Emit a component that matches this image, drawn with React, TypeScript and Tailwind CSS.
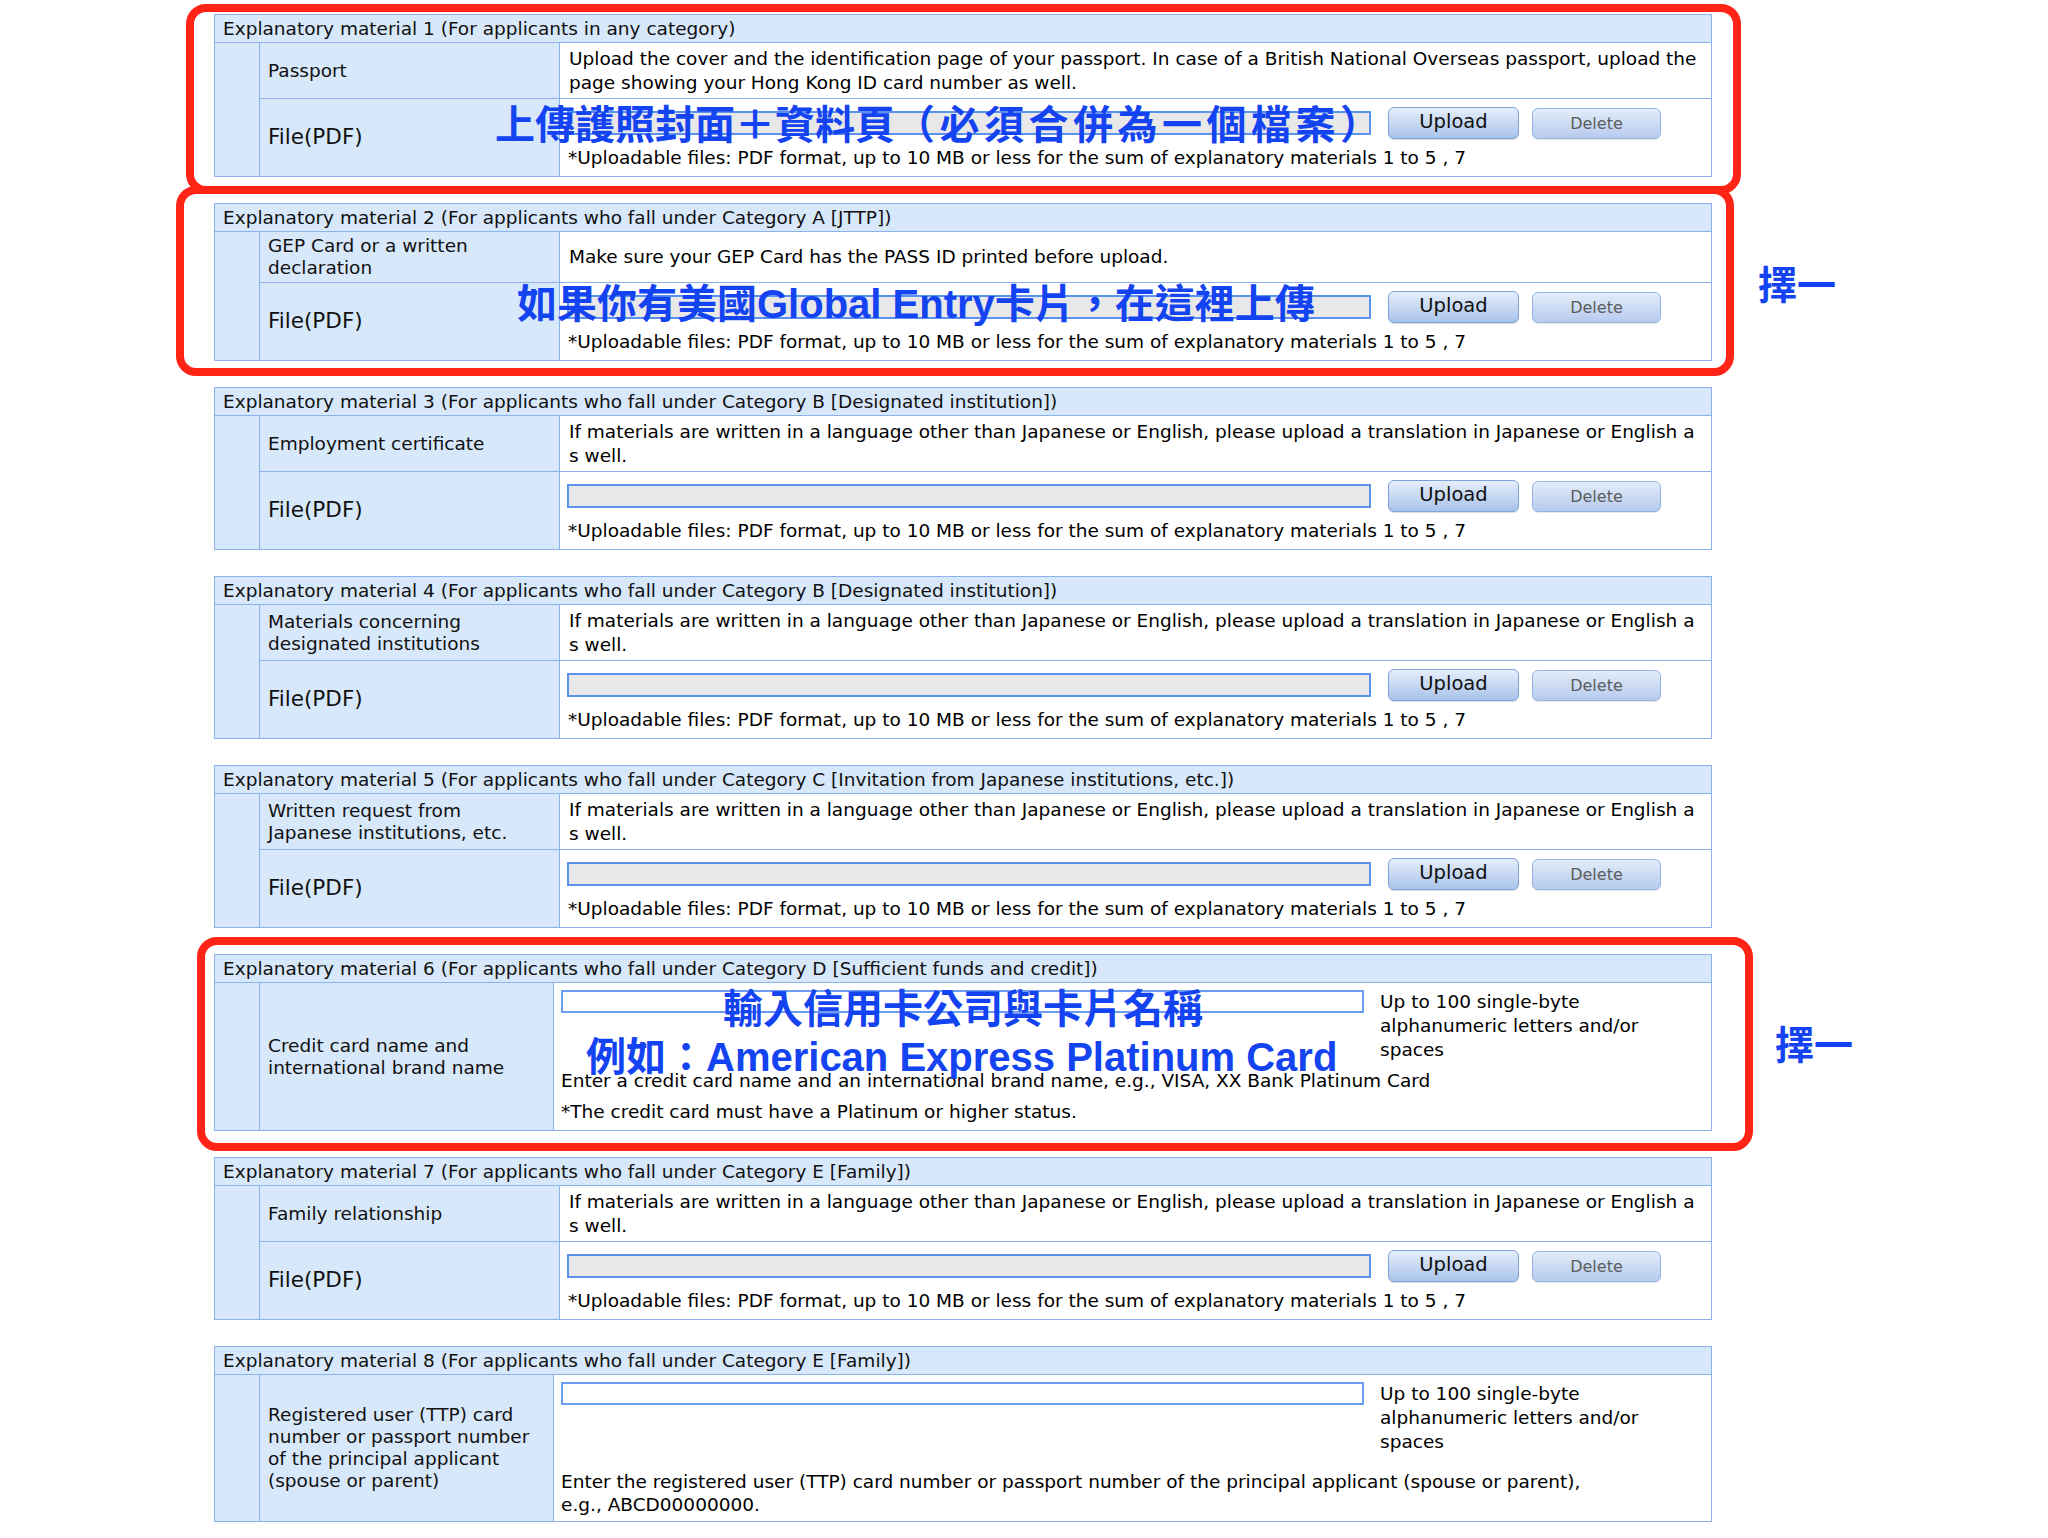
import React from "react";

const LINE = "border-[#8cb2ec]";

function Section({ title, children }: { title: string; children: React.ReactNode }) {
  return (
    <div className="ml-[214px] w-[1498px] border border-[#8cb2ec] bg-[#d8e8fb]">
      <div className="h-[28px] border-b border-[#8cb2ec] pl-[8px] leading-[27px] whitespace-nowrap text-[#111]">
        {title}
      </div>
      <div className="flex">
        <div className="w-[44px] shrink-0" />
        <div className="flex flex-1 flex-col border-l border-[#8cb2ec]">{children}</div>
      </div>
    </div>
  );
}

function Row({
  label,
  labelClass = "w-[300px]",
  rowClass,
  last,
  children,
}: {
  label: React.ReactNode;
  labelClass?: string;
  rowClass: string;
  last?: boolean;
  children: React.ReactNode;
}) {
  return (
    <div className={`flex ${rowClass} ${last ? "" : "border-b " + LINE}`}>
      <div
        className={`${labelClass} flex shrink-0 items-center border-r border-[#8cb2ec] pl-[8px] leading-[22px] text-[#111]`}
      >
        <div>{label}</div>
      </div>
      <div className="flex-1 bg-white">{children}</div>
    </div>
  );
}

function TextRow({
  label,
  lines,
  rowClass = "h-[56px]",
}: {
  label: React.ReactNode;
  lines: string[];
  rowClass?: string;
}) {
  return (
    <Row label={label} rowClass={rowClass}>
      <div className="flex h-full items-center pl-[9px] leading-[24px] whitespace-nowrap">
        <div>
          {lines.map((l, i) => (
            <div key={i}>{l}</div>
          ))}
        </div>
      </div>
    </Row>
  );
}

function FileRow() {
  return (
    <Row label={<span className="text-[21.5px]">File(PDF)</span>} rowClass="h-[77px]" last>
      <div className="pl-[7px] pt-[8px]">
        <div className="flex h-[32px] items-center">
          <div className="h-[24px] w-[804px] shrink-0 border-2 border-[#5a92ee] bg-[#e8e8e8]" />
          <button className="ml-[17px] h-[32px] w-[131px] shrink-0 rounded-[6px] border border-[#7ea3dc] bg-linear-to-b from-[#e6eefb] to-[#a9c3ea] pb-[3px] text-[19.5px] leading-[26px] text-[#111] shadow-[0_1px_1px_rgba(0,0,0,0.15)]">
            Upload
          </button>
          <button className="ml-[13px] h-[31px] w-[129px] shrink-0 rounded-[6px] border border-[#95b4e4] bg-linear-to-b from-[#e3ecf9] to-[#b6cbee] text-[16px] leading-[29px] text-[#5c5c5c] shadow-[0_1px_1px_rgba(0,0,0,0.1)]">
            Delete
          </button>
        </div>
        <div className="mt-[7px] pl-[1px] leading-[24px] whitespace-nowrap">
          *Uploadable files: PDF format, up to 10 MB or less for the sum of explanatory materials 1 to 5 , 7
        </div>
      </div>
    </Row>
  );
}

function InputRow({
  label,
  paras,
  gapClass,
  rowClass,
}: {
  label: React.ReactNode;
  paras: React.ReactNode;
  gapClass: string;
  rowClass: string;
}) {
  return (
    <Row label={label} labelClass="w-[294px]" rowClass={rowClass} last>
      <div className="pl-[7px] pt-[7px] leading-[24px]">
        <div className="flex items-start">
          <div className="h-[23px] w-[803px] shrink-0 border-2 border-[#6d9df0] bg-white" />
          <div className="ml-[16px] whitespace-nowrap">
            <div>Up to 100 single-byte</div>
            <div>alphanumeric letters and/or</div>
            <div>spaces</div>
          </div>
        </div>
        <div className={`${gapClass} whitespace-nowrap`}>{paras}</div>
      </div>
    </Row>
  );
}

const TRANSLATION = [
  "If materials are written in a language other than Japanese or English, please upload a translation in Japanese or English a",
  "s well.",
];

const OVERLAY =
  "absolute whitespace-nowrap font-['Liberation_Sans','Noto_Sans_CJK_TC',sans-serif] font-bold leading-none text-[#1443f2]";

export default function App() {
  return (
    <div className="relative h-[1538px] w-[2048px] overflow-hidden bg-white font-['DejaVu_Sans',sans-serif] text-[18.5px] text-black">
      <div className="flex flex-col gap-[26px] pt-[14px]">
        <Section title="Explanatory material 1 (For applicants in any category)">
          <TextRow
            label="Passport"
            lines={[
              "Upload the cover and the identification page of your passport. In case of a British National Overseas passport, upload the",
              "page showing your Hong Kong ID card number as well.",
            ]}
          />
          <FileRow />
        </Section>

        <Section title="Explanatory material 2 (For applicants who fall under Category A [JTTP])">
          <TextRow
            label={
              <>
                GEP Card or a written
                <br />
                declaration
              </>
            }
            rowClass="h-[51px]"
            lines={["Make sure your GEP Card has the PASS ID printed before upload."]}
          />
          <FileRow />
        </Section>

        <Section title="Explanatory material 3 (For applicants who fall under Category B [Designated institution])">
          <TextRow label="Employment certificate" lines={TRANSLATION} />
          <FileRow />
        </Section>

        <Section title="Explanatory material 4 (For applicants who fall under Category B [Designated institution])">
          <TextRow
            label={
              <>
                Materials concerning
                <br />
                designated institutions
              </>
            }
            lines={TRANSLATION}
          />
          <FileRow />
        </Section>

        <Section title="Explanatory material 5 (For applicants who fall under Category C [Invitation from Japanese institutions, etc.])">
          <TextRow
            label={
              <>
                Written request from
                <br />
                Japanese institutions, etc.
              </>
            }
            lines={TRANSLATION}
          />
          <FileRow />
        </Section>

        <Section title="Explanatory material 6 (For applicants who fall under Category D [Sufficient funds and credit])">
          <InputRow
            label={
              <>
                Credit card name and
                <br />
                international brand name
              </>
            }
            rowClass="h-[147px]"
            gapClass="mt-[7px]"
            paras={
              <>
                <div>Enter a credit card name and an international brand name, e.g., VISA, XX Bank Platinum Card</div>
                <div className="mt-[7px]">*The credit card must have a Platinum or higher status.</div>
              </>
            }
          />
        </Section>

        <Section title="Explanatory material 7 (For applicants who fall under Category E [Family])">
          <TextRow label="Family relationship" lines={TRANSLATION} />
          <FileRow />
        </Section>

        <Section title="Explanatory material 8 (For applicants who fall under Category E [Family])">
          <InputRow
            label={
              <>
                Registered user (TTP) card
                <br />
                number or passport number
                <br />
                of the principal applicant
                <br />
                (spouse or parent)
              </>
            }
            rowClass="h-[146px]"
            gapClass="mt-[16px] leading-[23px]"
            paras={
              <>
                <div>
                  Enter the registered user (TTP) card number or passport number of the principal applicant (spouse or parent),
                </div>
                <div>e.g., ABCD00000000.</div>
              </>
            }
          />
        </Section>
      </div>

      {/* Red annotation boxes */}
      <div className="pointer-events-none absolute left-[186px] top-[4px] h-[190px] w-[1555px] rounded-[20px] border-[8px] border-[#ff2416]" />
      <div className="pointer-events-none absolute left-[176px] top-[186px] h-[190px] w-[1558px] rounded-[20px] border-[8px] border-[#ff2416]" />
      <div className="pointer-events-none absolute left-[197px] top-[937px] h-[214px] w-[1556px] rounded-[20px] border-[8px] border-[#ff2416]" />

      {/* Blue annotation texts */}
      <div className={`${OVERLAY} left-[495px] top-[105px] text-[40px]`}>
        上傳護照封面＋資料頁<span className="tracking-[4.5px]">（必須合併為一個檔案）</span>
      </div>
      <div className={`${OVERLAY} left-[517px] top-[284px] text-[40px]`}>如果你有美國Global Entry卡片，在這裡上傳</div>
      <div className={`${OVERLAY} left-[723px] top-[989px] text-[40px]`}>輸入信用卡公司與卡片名稱</div>
      <div className={`${OVERLAY} left-[586px] top-[1037px] text-[40px]`}>例如：American Express Platinum Card</div>
      <div className={`${OVERLAY} left-[1758px] top-[266px] text-[39px]`}>擇一</div>
      <div className={`${OVERLAY} left-[1775px] top-[1026px] text-[39px]`}>擇一</div>
    </div>
  );
}
